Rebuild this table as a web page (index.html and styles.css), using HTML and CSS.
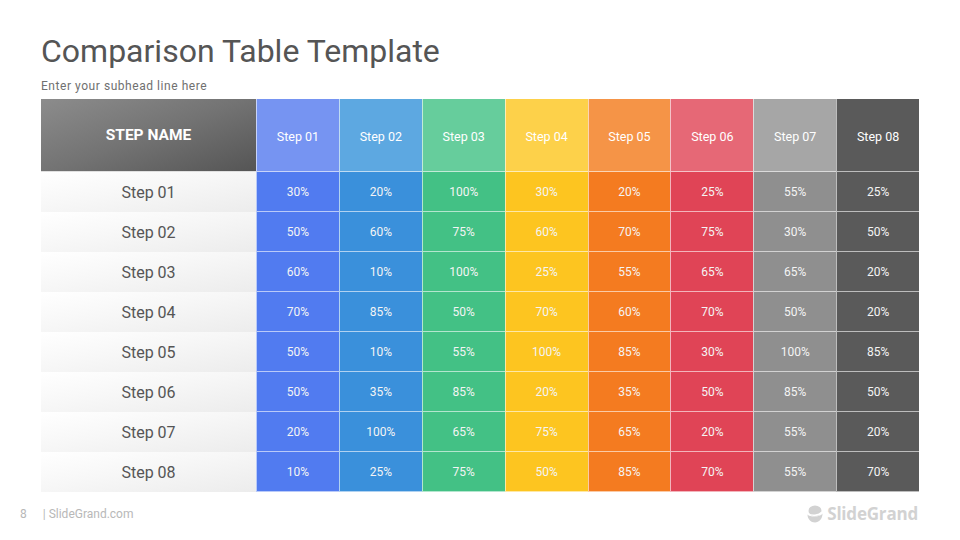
FILE: index.html
```html
<!DOCTYPE html>
<html>
<head>
<meta charset="utf-8">
<link rel="stylesheet" href="styles.css">
</head>
<body>
<div class="slide">
  <header class="head">
    <h1 class="title">Comparison Table Template</h1>
    <p class="subhead">Enter your subhead line here</p>
  </header>
  <div class="table">
    <div class="name-head">STEP NAME</div>
    <div class="th c1">Step 01</div>
    <div class="th c2">Step 02</div>
    <div class="th c3">Step 03</div>
    <div class="th c4">Step 04</div>
    <div class="th c5">Step 05</div>
    <div class="th c6">Step 06</div>
    <div class="th c7">Step 07</div>
    <div class="th c8">Step 08</div>

    <div class="name">Step 01</div>
    <div class="td c1">30%</div><div class="td c2">20%</div><div class="td c3">100%</div><div class="td c4">30%</div><div class="td c5">20%</div><div class="td c6">25%</div><div class="td c7">55%</div><div class="td c8">25%</div>

    <div class="name">Step 02</div>
    <div class="td c1">50%</div><div class="td c2">60%</div><div class="td c3">75%</div><div class="td c4">60%</div><div class="td c5">70%</div><div class="td c6">75%</div><div class="td c7">30%</div><div class="td c8">50%</div>

    <div class="name">Step 03</div>
    <div class="td c1">60%</div><div class="td c2">10%</div><div class="td c3">100%</div><div class="td c4">25%</div><div class="td c5">55%</div><div class="td c6">65%</div><div class="td c7">65%</div><div class="td c8">20%</div>

    <div class="name">Step 04</div>
    <div class="td c1">70%</div><div class="td c2">85%</div><div class="td c3">50%</div><div class="td c4">70%</div><div class="td c5">60%</div><div class="td c6">70%</div><div class="td c7">50%</div><div class="td c8">20%</div>

    <div class="name">Step 05</div>
    <div class="td c1">50%</div><div class="td c2">10%</div><div class="td c3">55%</div><div class="td c4">100%</div><div class="td c5">85%</div><div class="td c6">30%</div><div class="td c7">100%</div><div class="td c8">85%</div>

    <div class="name">Step 06</div>
    <div class="td c1">50%</div><div class="td c2">35%</div><div class="td c3">85%</div><div class="td c4">20%</div><div class="td c5">35%</div><div class="td c6">50%</div><div class="td c7">85%</div><div class="td c8">50%</div>

    <div class="name">Step 07</div>
    <div class="td c1">20%</div><div class="td c2">100%</div><div class="td c3">65%</div><div class="td c4">75%</div><div class="td c5">65%</div><div class="td c6">20%</div><div class="td c7">55%</div><div class="td c8">20%</div>

    <div class="name">Step 08</div>
    <div class="td c1">10%</div><div class="td c2">25%</div><div class="td c3">75%</div><div class="td c4">50%</div><div class="td c5">85%</div><div class="td c6">70%</div><div class="td c7">55%</div><div class="td c8">70%</div>
  </div>
  <footer class="foot">
    <div class="foot-left">
      <span class="page">8</span>
      <span class="site">| SlideGrand.com</span>
    </div>
    <div class="logo">
      <svg class="logo-icon" width="16" height="18" viewBox="0 0 16 18">
        <ellipse cx="8" cy="6" rx="6.5" ry="5.5" fill="#d2d2d2"/>
        <path d="M0.5 9.5 C3 12.5 13 12.5 15.5 8.5 C15.5 14 12 17.5 8 17.5 C4 17.5 0.5 14 0.5 9.5 Z" fill="#d2d2d2"/>
        <path d="M1 8.5 C4 11 12 11 15 7" stroke="#fff" stroke-width="1.6" fill="none"/>
      </svg>
      <span class="logo-text">SlideGrand</span>
    </div>
  </footer>
</div>
</body>
</html>
```

FILE: styles.css
```css
* { box-sizing: border-box; }
html, body { margin: 0; padding: 0; background: #fff; }
body { font-family: Roboto, "Noto Sans", "Liberation Sans", sans-serif; }

.slide {
  width: 960px;
  height: 540px;
  padding: 32px 41px 0 41px;
  display: flex;
  flex-direction: column;
  overflow: hidden;
}

.title {
  margin: 0;
  font-size: 32px;
  font-weight: 400;
  color: #555555;
  line-height: 38px;
}
.subhead {
  margin: 9px 0 0 0;
  font-size: 12px;
  line-height: 15px;
  color: #707070;
  letter-spacing: 0.55px;
}

.table {
  margin-top: 5px;
  width: 878px;
  display: grid;
  grid-template-columns: 215px repeat(8, 1fr);
  grid-template-rows: 73px repeat(8, 40px);
}

.name-head {
  background: linear-gradient(160deg, #8c8c8c 0%, #737373 50%, #555555 100%);
  color: #fff;
  font-weight: 700;
  font-size: 15.5px;
  display: flex;
  align-items: center;
  justify-content: center;
  padding-bottom: 1px;
  border-bottom: 1px solid #e0e0e0;
}

.name {
  background: linear-gradient(170deg, #ffffff 0%, #f7f7f7 45%, #ececec 100%);
  color: #555555;
  font-size: 16px;
  display: flex;
  align-items: center;
  justify-content: center;
}

.th, .td {
  color: #fff;
  display: flex;
  align-items: center;
  justify-content: center;
  border-left: 1px solid rgba(255,255,255,0.6);
  border-bottom: 1px solid rgba(255,255,255,0.6);
}
.th { font-size: 12.5px; padding-top: 2px; }
.td { font-size: 12px; color: #f4f4f4; }

.th.c1 { background: #7694f2; }
.th.c2 { background: #5da8e1; }
.th.c3 { background: #66cd9c; }
.th.c4 { background: #fdd14a; }
.th.c5 { background: #f59447; }
.th.c6 { background: #e66876; }
.th.c7 { background: #a6a6a6; }
.th.c8 { background: #5a5a5a; }

.td.c1 { background: #517bf0; }
.td.c2 { background: #3a90db; }
.td.c3 { background: #43c185; }
.td.c4 { background: #fdc520; }
.td.c5 { background: #f47b20; }
.td.c6 { background: #e04456; }
.td.c7 { background: #8f8f8f; }
.td.c8 { background: #5a5a5a; }

.foot {
  margin: 10px -41px 0 -41px;
  padding: 0 42px 0 20px;
  display: flex;
  justify-content: space-between;
  align-items: center;
}
.foot-left {
  display: flex;
  align-items: center;
  gap: 16px;
  font-size: 12px;
  color: #b8b8b8;
}
.logo {
  display: flex;
  align-items: center;
  gap: 4px;
}
.logo-text {
  font-family: "Open Sans", "Noto Sans", sans-serif;
  font-weight: 700;
  font-size: 17px;
  color: #d2d2d2;
  letter-spacing: -0.2px;
}
```
